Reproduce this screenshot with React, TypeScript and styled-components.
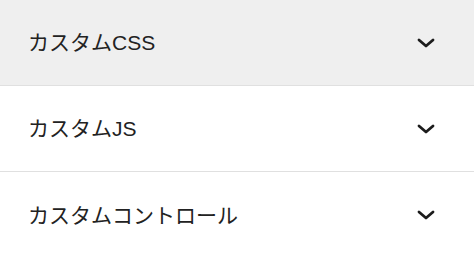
import { FC } from 'react';
import styled, { createGlobalStyle } from 'styled-components';

interface ISItem {
  isActive: boolean;
}

const GlobalStyle = createGlobalStyle`
  html, body {
    margin: 0;
    padding: 0;
    background: #ffffff;
  }
  body {
    font-family: "Liberation Sans", "Noto Sans CJK JP", sans-serif;
    color: #222222;
  }
`;

const SList = styled.div`
  width: 474px;
  display: flex;
  flex-direction: column;
`;
const SItem = styled.div<ISItem>`
  height: 86px;
  box-sizing: border-box;
  display: flex;
  align-items: center;
  justify-content: space-between;
  padding: 0 39px 0 28px;
  border-bottom: 1px solid #e0e0e0;
  background: ${({ isActive }) => (isActive ? '#efefef' : '#ffffff')};

  &:last-child {
    border-bottom: none;
  }
`;
const SLabel = styled.span`
  font-size: 21px;
  line-height: 1;
  color: #222222;
`;
const SChevron = styled.svg`
  width: 18px;
  height: 10px;
  display: block;
`;

const items = ['カスタムCSS', 'カスタムJS', 'カスタムコントロール'];

const Chevron: FC = () => (
  <SChevron viewBox="0 0 18 10">
    <polyline
      points="2,2 9,8 16,2"
      fill="none"
      stroke="#1c1c1c"
      strokeWidth="2.8"
      strokeLinecap="round"
      strokeLinejoin="round"
    />
  </SChevron>
);

const App: FC = () => (
  <>
    <GlobalStyle />
    <SList>
      {items.map((label, i) => (
        <SItem key={label} isActive={i === 0}>
          <SLabel>{label}</SLabel>
          <Chevron />
        </SItem>
      ))}
    </SList>
  </>
);

export default App;
